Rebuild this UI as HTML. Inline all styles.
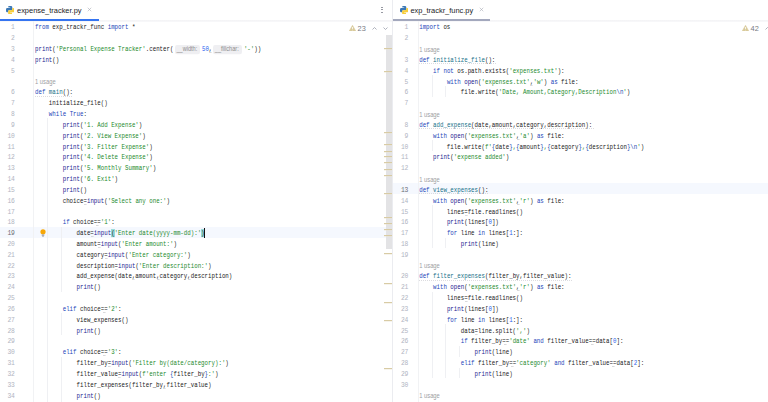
<!DOCTYPE html>
<html><head><meta charset="utf-8"><style>
*{margin:0;padding:0;box-sizing:border-box}
html,body{width:768px;height:402px;overflow:hidden;background:#fff}
body{position:relative;font-family:"Liberation Sans",sans-serif}
.pane{position:absolute;top:0;bottom:0;overflow:hidden}
.c,.ln,.u{position:absolute;height:10.83px;line-height:10.83px;white-space:pre;margin-top:2.4px}
.c{font-family:"Liberation Mono",monospace;font-size:5.77px;letter-spacing:0.0px;color:#202020;transform:scaleY(1.15);transform-origin:0 7.0px}
.ln{font-family:"Liberation Mono",monospace;font-size:6.3px;letter-spacing:-0.3px;color:#b0b4c1;text-align:right;width:30px;transform:scaleY(1.1);transform-origin:0 7px}
.ln.cur{color:#6a6c73}
.u{font-size:5.8px;color:#9d9ea3;margin-top:2.1px;letter-spacing:0.0px;transform:scaleY(1.25);transform-origin:0 7px}
.k{color:#1a44b8} .s{color:#1d8a2c} .b{color:#222290} .f{color:#147088} .n{color:#2a5eee} .e{color:#1a4ab0}
.M{background:#93d9d9} .q{background:linear-gradient(#cfcfd2,#cfcfd2) no-repeat 50% 6.2px/2.6px 0.7px}
.h{display:inline-block;position:relative;font-style:normal;font-family:"Liberation Sans",sans-serif;font-size:5.6px;color:#8c8c8c;background:#efeff2;border-radius:2px;height:8.1px;line-height:7.2px;vertical-align:top;top:0.8px;padding-left:1.5px;overflow:hidden}
.tabs{position:absolute;left:0;top:20px;height:2px;width:100%;background:linear-gradient(#f3f3f5,#f8f8fa)}
.tab{position:absolute;top:1.4px;height:21px;font-size:7.45px;color:#222326;line-height:20px}
.gsep{position:absolute;top:21px;bottom:0;width:1px;background:#eef0f3}
.guide{position:absolute;width:1px;background:#eceef2}
</style></head><body>
<div class="pane" style="left:0;width:392px">
<div class="tabs"></div>
<div style="position:absolute;left:0;top:19px;width:99px;height:2px;background:#3574f0"></div>
<svg style="position:absolute;left:5.8px;top:5.8px" width="8.4" height="8.4" viewBox="0 0 16 16"><path fill="#3b78b5" d="M4.5,0H9.5Q12,0 12,2.5V6Q12,8 10,8H6.5Q4,8 4,10.5V12H2.5Q0,12 0,9.5V6.5Q0,4 2.5,4H8V3H4.5Z"/><path fill="#f7cd3b" d="M11.5,16H6.5Q4,16 4,13.5V10Q4,8 6,8H9.5Q12,8 12,5.5V4H13.5Q16,4 16,6.5V9.5Q16,12 13.5,12H8V13H11.5Z"/></svg>
<div class="tab" style="left:17px">expense_tracker.py</div>
<svg style="position:absolute;left:87.2px;top:7.2px" width="5" height="5" viewBox="0 0 10 10"><path d="M1.5,1.5L8.5,8.5M8.5,1.5L1.5,8.5" stroke="#a8abb5" stroke-width="1.2"/></svg>
<div style="position:absolute;left:381.3px;top:6.6px;width:1.3px;height:1.3px;border-radius:50%;background:#8a8d97"></div><div style="position:absolute;left:381.3px;top:9.2px;width:1.3px;height:1.3px;border-radius:50%;background:#8a8d97"></div><div style="position:absolute;left:381.3px;top:11.8px;width:1.3px;height:1.3px;border-radius:50%;background:#8a8d97"></div>
<div style="position:absolute;left:0;width:392px;height:10.83px;top:226.77px;background:#f5f8fe"></div>
<div style="position:absolute;left:33.3px;top:21.00px;width:1px;height:381.00px;background:#f1f2f4"></div>
<div style="position:absolute;left:47.44px;top:118.47px;width:1px;height:346.56px;background:#eff0f3"></div><div style="position:absolute;left:61.28px;top:226.77px;width:1px;height:64.98px;background:#eff0f3"></div><div style="position:absolute;left:61.28px;top:313.41px;width:1px;height:21.66px;background:#eff0f3"></div><div style="position:absolute;left:61.28px;top:356.73px;width:1px;height:108.30px;background:#eff0f3"></div>
<div style="position:absolute;left:35px;top:95.58px;width:38px;height:1px;background:repeating-linear-gradient(90deg,#dcdce0 0 1px,transparent 1px 2px)"></div>
<svg style="position:absolute;left:349px;top:25px" width="7" height="6.2" viewBox="0 0 14 12.4"><path d="M7,0.5L13.5,12H0.5Z" fill="#d9cb9c" stroke="#d9cb9c" stroke-linejoin="round" stroke-width="1"/><path d="M7,4V8M7,9.5V10.6" stroke="#fff" stroke-width="1.6"/></svg><div style="position:absolute;left:357.6px;top:24.2px;font-size:7.4px;line-height:9px;color:#767981">23</div>
<svg style="position:absolute;left:371.5px;top:27px" width="5" height="3" viewBox="0 0 10 6"><path d="M1,5L5,1L9,5" fill="none" stroke="#9a9eab" stroke-width="1.6"/></svg><svg style="position:absolute;left:383px;top:27px" width="5" height="3" viewBox="0 0 10 6"><path d="M1,1L5,5L9,1" fill="none" stroke="#9a9eab" stroke-width="1.6"/></svg>
<div style="position:absolute;left:386.3px;top:35.2px;width:5.9px;height:213.6px;background:#e3e3e5"></div>
<div style="position:absolute;left:384.3px;top:47.6px;width:7.7px;height:1.1px;background:#d8cba4;box-shadow:0 0.4px 0 #ebe4cf"></div><div style="position:absolute;left:384.3px;top:71.2px;width:7.7px;height:1.1px;background:#d8cba4;box-shadow:0 0.4px 0 #ebe4cf"></div><div style="position:absolute;left:384.3px;top:132.2px;width:7.7px;height:1.1px;background:#d8cba4;box-shadow:0 0.4px 0 #ebe4cf"></div><div style="position:absolute;left:384.3px;top:144.1px;width:7.7px;height:1.1px;background:#d8cba4;box-shadow:0 0.4px 0 #ebe4cf"></div><div style="position:absolute;left:384.3px;top:150.6px;width:7.7px;height:1.1px;background:#d8cba4;box-shadow:0 0.4px 0 #ebe4cf"></div><div style="position:absolute;left:384.3px;top:156.3px;width:7.7px;height:1.1px;background:#d8cba4;box-shadow:0 0.4px 0 #ebe4cf"></div><div style="position:absolute;left:384.3px;top:162.3px;width:7.7px;height:1.1px;background:#d8cba4;box-shadow:0 0.4px 0 #ebe4cf"></div><div style="position:absolute;left:384.3px;top:168.5px;width:7.7px;height:1.1px;background:#d8cba4;box-shadow:0 0.4px 0 #ebe4cf"></div><div style="position:absolute;left:384.3px;top:174.5px;width:7.7px;height:1.1px;background:#d8cba4;box-shadow:0 0.4px 0 #ebe4cf"></div><div style="position:absolute;left:384.3px;top:193.1px;width:7.7px;height:1.1px;background:#d8cba4;box-shadow:0 0.4px 0 #ebe4cf"></div><div style="position:absolute;left:384.3px;top:216.7px;width:7.7px;height:1.1px;background:#d8cba4;box-shadow:0 0.4px 0 #ebe4cf"></div><div style="position:absolute;left:384.3px;top:223.2px;width:7.7px;height:1.1px;background:#d8cba4;box-shadow:0 0.4px 0 #ebe4cf"></div><div style="position:absolute;left:384.3px;top:229.2px;width:7.7px;height:1.1px;background:#d8cba4;box-shadow:0 0.4px 0 #ebe4cf"></div><div style="position:absolute;left:384.3px;top:234.7px;width:7.7px;height:1.1px;background:#d8cba4;box-shadow:0 0.4px 0 #ebe4cf"></div><div style="position:absolute;left:384.3px;top:252.8px;width:7.7px;height:1.1px;background:#d8cba4;box-shadow:0 0.4px 0 #ebe4cf"></div><div style="position:absolute;left:384.3px;top:283.2px;width:7.7px;height:1.1px;background:#d8cba4;box-shadow:0 0.4px 0 #ebe4cf"></div><div style="position:absolute;left:384.3px;top:301.7px;width:7.7px;height:1.1px;background:#d8cba4;box-shadow:0 0.4px 0 #ebe4cf"></div><div style="position:absolute;left:384.3px;top:319.7px;width:7.7px;height:1.1px;background:#d8cba4;box-shadow:0 0.4px 0 #ebe4cf"></div><div style="position:absolute;left:384.3px;top:368.3px;width:7.7px;height:1.1px;background:#d8cba4;box-shadow:0 0.4px 0 #ebe4cf"></div>
<svg style="position:absolute;left:39.6px;top:228.6px" width="6" height="8" viewBox="0 0 12 16"><circle cx="6" cy="5.5" r="5.2" fill="#f7a707"/><rect x="3.5" y="11" width="5" height="2.4" fill="#8f8f98"/><rect x="4.5" y="14" width="3" height="1.3" fill="#8f8f98"/></svg>
<div class="ln" style="top:21.00px;left:-15.60px">1</div>
<div class="c" style="top:21.00px;left:35.00px"><span class=k>from</span> exp_trackr_func <span class=k>import</span> *</div>
<div class="ln" style="top:31.83px;left:-15.60px">2</div>
<div class="ln" style="top:42.66px;left:-15.60px">3</div>
<div class="c" style="top:42.66px;left:35.00px"><span class=b>print</span>(<span class=s>'Personal Expense Tracker'</span>.center(<i class="h" style="width:25.3px;margin:0 1.7px 0 1.5px">__width:</i><span class=n>50</span><span class=q>,</span><i class="h" style="width:29px;margin:0 1.6px 0 1.0px">__fillchar:</i><span class=s>'-'</span>))</div>
<div class="ln" style="top:53.49px;left:-15.60px">4</div>
<div class="c" style="top:53.49px;left:35.00px"><span class=b>print</span>()</div>
<div class="ln" style="top:64.32px;left:-15.60px">5</div>
<div class="u" style="top:75.15px;left:35.00px">1 usage</div>
<div class="ln" style="top:85.98px;left:-15.60px">6</div>
<div class="c" style="top:85.98px;left:35.00px"><span class=k>def</span> <span class=f>main</span>():</div>
<div class="ln" style="top:96.81px;left:-15.60px">7</div>
<div class="c" style="top:96.81px;left:35.00px">    initialize_file()</div>
<div class="ln" style="top:107.64px;left:-15.60px">8</div>
<div class="c" style="top:107.64px;left:35.00px">    <span class=k>while</span> <span class=k>True</span>:</div>
<div class="ln" style="top:118.47px;left:-15.60px">9</div>
<div class="c" style="top:118.47px;left:35.00px">        <span class=b>print</span>(<span class=s>'1. Add Expense'</span>)</div>
<div class="ln" style="top:129.30px;left:-15.60px">10</div>
<div class="c" style="top:129.30px;left:35.00px">        <span class=b>print</span>(<span class=s>'2. View Expense'</span>)</div>
<div class="ln" style="top:140.13px;left:-15.60px">11</div>
<div class="c" style="top:140.13px;left:35.00px">        <span class=b>print</span>(<span class=s>'3. Filter Expense'</span>)</div>
<div class="ln" style="top:150.96px;left:-15.60px">12</div>
<div class="c" style="top:150.96px;left:35.00px">        <span class=b>print</span>(<span class=s>'4. Delete Expense'</span>)</div>
<div class="ln" style="top:161.79px;left:-15.60px">13</div>
<div class="c" style="top:161.79px;left:35.00px">        <span class=b>print</span>(<span class=s>'5. Monthly Summary'</span>)</div>
<div class="ln" style="top:172.62px;left:-15.60px">14</div>
<div class="c" style="top:172.62px;left:35.00px">        <span class=b>print</span>(<span class=s>'6. Exit'</span>)</div>
<div class="ln" style="top:183.45px;left:-15.60px">15</div>
<div class="c" style="top:183.45px;left:35.00px">        <span class=b>print</span>()</div>
<div class="ln" style="top:194.28px;left:-15.60px">16</div>
<div class="c" style="top:194.28px;left:35.00px">        choice<span class=q>=</span><span class=b>input</span>(<span class=s>'Select any one:'</span>)</div>
<div class="ln" style="top:205.11px;left:-15.60px">17</div>
<div class="ln" style="top:215.94px;left:-15.60px">18</div>
<div class="c" style="top:215.94px;left:35.00px">        <span class=k>if</span> choice<span class=q>==</span><span class=s>'1'</span>:</div>
<div class="ln cur" style="top:226.77px;left:-15.60px">19</div>
<div class="c" style="top:226.77px;left:35.00px">            date<span class=q>=</span><span class=b>input</span><span class=M>(</span><span class=s>'Enter date(yyyy-mm-dd):'</span><span class=M>)</span></div>
<div class="ln" style="top:237.60px;left:-15.60px">20</div>
<div class="c" style="top:237.60px;left:35.00px">            amount<span class=q>=</span><span class=b>input</span>(<span class=s>'Enter amount:'</span>)</div>
<div class="ln" style="top:248.43px;left:-15.60px">21</div>
<div class="c" style="top:248.43px;left:35.00px">            category<span class=q>=</span><span class=b>input</span>(<span class=s>'Enter category:'</span>)</div>
<div class="ln" style="top:259.26px;left:-15.60px">22</div>
<div class="c" style="top:259.26px;left:35.00px">            description<span class=q>=</span><span class=b>input</span>(<span class=s>'Enter description:'</span>)</div>
<div class="ln" style="top:270.09px;left:-15.60px">23</div>
<div class="c" style="top:270.09px;left:35.00px">            add_expense(date<span class=q>,</span>amount<span class=q>,</span>category<span class=q>,</span>description)</div>
<div class="ln" style="top:280.92px;left:-15.60px">24</div>
<div class="c" style="top:280.92px;left:35.00px">            <span class=b>print</span>()</div>
<div class="ln" style="top:291.75px;left:-15.60px">25</div>
<div class="ln" style="top:302.58px;left:-15.60px">26</div>
<div class="c" style="top:302.58px;left:35.00px">        <span class=k>elif</span> choice<span class=q>==</span><span class=s>'2'</span>:</div>
<div class="ln" style="top:313.41px;left:-15.60px">27</div>
<div class="c" style="top:313.41px;left:35.00px">            view_expenses()</div>
<div class="ln" style="top:324.24px;left:-15.60px">28</div>
<div class="c" style="top:324.24px;left:35.00px">            <span class=b>print</span>()</div>
<div class="ln" style="top:335.07px;left:-15.60px">29</div>
<div class="ln" style="top:345.90px;left:-15.60px">30</div>
<div class="c" style="top:345.90px;left:35.00px">        <span class=k>elif</span> choice<span class=q>==</span><span class=s>'3'</span>:</div>
<div class="ln" style="top:356.73px;left:-15.60px">31</div>
<div class="c" style="top:356.73px;left:35.00px">            filter_by<span class=q>=</span><span class=b>input</span>(<span class=s>'Filter by(date/category):'</span>)</div>
<div class="ln" style="top:367.56px;left:-15.60px">32</div>
<div class="c" style="top:367.56px;left:35.00px">            filter_value<span class=q>=</span><span class=b>input</span>(<span class=s>f'enter </span><span class=e>{</span>filter_by<span class=e>}</span><span class=s>:'</span>)</div>
<div class="ln" style="top:378.39px;left:-15.60px">33</div>
<div class="c" style="top:378.39px;left:35.00px">            filter_expenses(filter_by<span class=q>,</span>filter_value)</div>
<div class="ln" style="top:389.22px;left:-15.60px">34</div>
<div class="c" style="top:389.22px;left:35.00px">            <span class=b>print</span>()</div>
<div style="position:absolute;left:204.2px;top:227.5px;width:0.9px;height:10px;background:#111"></div>
</div>
<div style="position:absolute;left:392px;top:0;bottom:0;width:1px;background:#ebecf0"></div>
<div class="pane" style="left:393px;width:375px">
<div style="position:absolute;left:-393px;top:0;width:768px;height:402px">
<div class="tabs"></div>
<div style="position:absolute;left:393px;top:19px;width:97px;height:2px;background:#a3a8bd"></div>
<svg style="position:absolute;left:400.0px;top:5.8px" width="8.4" height="8.4" viewBox="0 0 16 16"><path fill="#3b78b5" d="M4.5,0H9.5Q12,0 12,2.5V6Q12,8 10,8H6.5Q4,8 4,10.5V12H2.5Q0,12 0,9.5V6.5Q0,4 2.5,4H8V3H4.5Z"/><path fill="#f7cd3b" d="M11.5,16H6.5Q4,16 4,13.5V10Q4,8 6,8H9.5Q12,8 12,5.5V4H13.5Q16,4 16,6.5V9.5Q16,12 13.5,12H8V13H11.5Z"/></svg>
<div class="tab" style="left:410.4px">exp_trackr_func.py</div>
<svg style="position:absolute;left:479.0px;top:7.2px" width="5" height="5" viewBox="0 0 10 10"><path d="M1.5,1.5L8.5,8.5M8.5,1.5L1.5,8.5" stroke="#a8abb5" stroke-width="1.2"/></svg>
<div style="position:absolute;left:393px;width:375px;height:10.83px;top:183.45px;background:#f5f8fe"></div>
<div style="position:absolute;left:417.6px;top:21.00px;width:1px;height:381.00px;background:#f1f2f4"></div>
<div style="position:absolute;left:431.64px;top:75.15px;width:1px;height:21.66px;background:#eff0f3"></div><div style="position:absolute;left:445.48px;top:85.98px;width:1px;height:10.83px;background:#eff0f3"></div><div style="position:absolute;left:431.64px;top:140.13px;width:1px;height:10.83px;background:#eff0f3"></div><div style="position:absolute;left:431.64px;top:205.11px;width:1px;height:43.32px;background:#eff0f3"></div><div style="position:absolute;left:445.48px;top:237.60px;width:1px;height:10.83px;background:#eff0f3"></div><div style="position:absolute;left:431.64px;top:291.75px;width:1px;height:86.64px;background:#eff0f3"></div><div style="position:absolute;left:445.48px;top:324.24px;width:1px;height:54.15px;background:#eff0f3"></div><div style="position:absolute;left:459.32px;top:345.90px;width:1px;height:10.83px;background:#eff0f3"></div><div style="position:absolute;left:459.32px;top:367.56px;width:1px;height:10.83px;background:#eff0f3"></div>
<div style="position:absolute;left:419px;top:63.09px;width:77px;height:1px;background:repeating-linear-gradient(90deg,#dcdce0 0 1px,transparent 1px 2px)"></div><div style="position:absolute;left:419px;top:128.07px;width:175px;height:1px;background:repeating-linear-gradient(90deg,#dcdce0 0 1px,transparent 1px 2px)"></div><div style="position:absolute;left:419px;top:193.05px;width:69px;height:1px;background:repeating-linear-gradient(90deg,#dcdce0 0 1px,transparent 1px 2px)"></div><div style="position:absolute;left:419px;top:279.69px;width:153px;height:1px;background:repeating-linear-gradient(90deg,#dcdce0 0 1px,transparent 1px 2px)"></div>
<svg style="position:absolute;left:742px;top:25px" width="7" height="6.2" viewBox="0 0 14 12.4"><path d="M7,0.5L13.5,12H0.5Z" fill="#d9cb9c" stroke="#d9cb9c" stroke-linejoin="round" stroke-width="1"/><path d="M7,4V8M7,9.5V10.6" stroke="#fff" stroke-width="1.6"/></svg><div style="position:absolute;left:750.6px;top:24.2px;font-size:7.4px;line-height:9px;color:#767981">42</div>
<svg style="position:absolute;left:765px;top:27px" width="5" height="3" viewBox="0 0 10 6"><path d="M1,5L5,1L9,5" fill="none" stroke="#9a9eab" stroke-width="1.6"/></svg>
<div class="ln" style="top:21.00px;left:377.90px">1</div>
<div class="c" style="top:21.00px;left:419.20px"><span class=k>import</span> os</div>
<div class="ln" style="top:31.83px;left:377.90px">2</div>
<div class="u" style="top:42.66px;left:419.20px">1 usage</div>
<div class="ln" style="top:53.49px;left:377.90px">3</div>
<div class="c" style="top:53.49px;left:419.20px"><span class=k>def</span> <span class=f>initialize_file</span>():</div>
<div class="ln" style="top:64.32px;left:377.90px">4</div>
<div class="c" style="top:64.32px;left:419.20px">    <span class=k>if</span> <span class=k>not</span> os.path.exists(<span class=s>'expenses.txt'</span>):</div>
<div class="ln" style="top:75.15px;left:377.90px">5</div>
<div class="c" style="top:75.15px;left:419.20px">        <span class=k>with</span> <span class=b>open</span>(<span class=s>'expenses.txt'</span><span class=q>,</span><span class=s>'w'</span>) <span class=k>as</span> file:</div>
<div class="ln" style="top:85.98px;left:377.90px">6</div>
<div class="c" style="top:85.98px;left:419.20px">            file.write(<span class=s>'Date, Amount,Category,Description</span><span class=e>\n</span><span class=s>'</span>)</div>
<div class="ln" style="top:96.81px;left:377.90px">7</div>
<div class="u" style="top:107.64px;left:419.20px">1 usage</div>
<div class="ln" style="top:118.47px;left:377.90px">8</div>
<div class="c" style="top:118.47px;left:419.20px"><span class=k>def</span> <span class=f>add_expense</span>(date,amount,category,description):</div>
<div class="ln" style="top:129.30px;left:377.90px">9</div>
<div class="c" style="top:129.30px;left:419.20px">    <span class=k>with</span> <span class=b>open</span>(<span class=s>'expenses.txt'</span><span class=q>,</span><span class=s>'a'</span>) <span class=k>as</span> file:</div>
<div class="ln" style="top:140.13px;left:377.90px">10</div>
<div class="c" style="top:140.13px;left:419.20px">        file.write(<span class=s>f'</span><span class=e>{</span>date<span class=e>}</span><span class=s>,</span><span class=e>{</span>amount<span class=e>}</span><span class=s>,</span><span class=e>{</span>category<span class=e>}</span><span class=s>,</span><span class=e>{</span>description<span class=e>}\n</span><span class=s>'</span>)</div>
<div class="ln" style="top:150.96px;left:377.90px">11</div>
<div class="c" style="top:150.96px;left:419.20px">    <span class=b>print</span>(<span class=s>'expense added'</span>)</div>
<div class="ln" style="top:161.79px;left:377.90px">12</div>
<div class="u" style="top:172.62px;left:419.20px">1 usage</div>
<div class="ln cur" style="top:183.45px;left:377.90px">13</div>
<div class="c" style="top:183.45px;left:419.20px"><span class=k>def</span> <span class=f>view_expenses</span>():</div>
<div class="ln" style="top:194.28px;left:377.90px">14</div>
<div class="c" style="top:194.28px;left:419.20px">    <span class=k>with</span> <span class=b>open</span>(<span class=s>'expenses.txt'</span><span class=q>,</span><span class=s>'r'</span>) <span class=k>as</span> file:</div>
<div class="ln" style="top:205.11px;left:377.90px">15</div>
<div class="c" style="top:205.11px;left:419.20px">        lines<span class=q>=</span>file.readlines()</div>
<div class="ln" style="top:215.94px;left:377.90px">16</div>
<div class="c" style="top:215.94px;left:419.20px">        <span class=b>print</span>(lines[<span class=n>0</span>])</div>
<div class="ln" style="top:226.77px;left:377.90px">17</div>
<div class="c" style="top:226.77px;left:419.20px">        <span class=k>for</span> line <span class=k>in</span> lines[<span class=n>1</span>:]:</div>
<div class="ln" style="top:237.60px;left:377.90px">18</div>
<div class="c" style="top:237.60px;left:419.20px">            <span class=b>print</span>(line)</div>
<div class="ln" style="top:248.43px;left:377.90px">19</div>
<div class="u" style="top:259.26px;left:419.20px">1 usage</div>
<div class="ln" style="top:270.09px;left:377.90px">20</div>
<div class="c" style="top:270.09px;left:419.20px"><span class=k>def</span> <span class=f>filter_expenses</span>(filter_by,filter_value):</div>
<div class="ln" style="top:280.92px;left:377.90px">21</div>
<div class="c" style="top:280.92px;left:419.20px">    <span class=k>with</span> <span class=b>open</span>(<span class=s>'expenses.txt'</span><span class=q>,</span><span class=s>'r'</span>) <span class=k>as</span> file:</div>
<div class="ln" style="top:291.75px;left:377.90px">22</div>
<div class="c" style="top:291.75px;left:419.20px">        lines<span class=q>=</span>file.readlines()</div>
<div class="ln" style="top:302.58px;left:377.90px">23</div>
<div class="c" style="top:302.58px;left:419.20px">        <span class=b>print</span>(lines[<span class=n>0</span>])</div>
<div class="ln" style="top:313.41px;left:377.90px">24</div>
<div class="c" style="top:313.41px;left:419.20px">        <span class=k>for</span> line <span class=k>in</span> lines[<span class=n>1</span>:]:</div>
<div class="ln" style="top:324.24px;left:377.90px">25</div>
<div class="c" style="top:324.24px;left:419.20px">            data<span class=q>=</span>line.split(<span class=s>','</span>)</div>
<div class="ln" style="top:335.07px;left:377.90px">26</div>
<div class="c" style="top:335.07px;left:419.20px">            <span class=k>if</span> filter_by<span class=q>==</span><span class=s>'date'</span> <span class=k>and</span> filter_value<span class=q>==</span>data[<span class=n>0</span>]:</div>
<div class="ln" style="top:345.90px;left:377.90px">27</div>
<div class="c" style="top:345.90px;left:419.20px">                <span class=b>print</span>(line)</div>
<div class="ln" style="top:356.73px;left:377.90px">28</div>
<div class="c" style="top:356.73px;left:419.20px">            <span class=k>elif</span> filter_by<span class=q>==</span><span class=s>'category'</span> <span class=k>and</span> filter_value<span class=q>==</span>data[<span class=n>2</span>]:</div>
<div class="ln" style="top:367.56px;left:377.90px">29</div>
<div class="c" style="top:367.56px;left:419.20px">                <span class=b>print</span>(line)</div>
<div class="ln" style="top:378.39px;left:377.90px">30</div>
<div class="u" style="top:389.22px;left:419.20px">1 usage</div>
</div>
</div>
</body></html>
